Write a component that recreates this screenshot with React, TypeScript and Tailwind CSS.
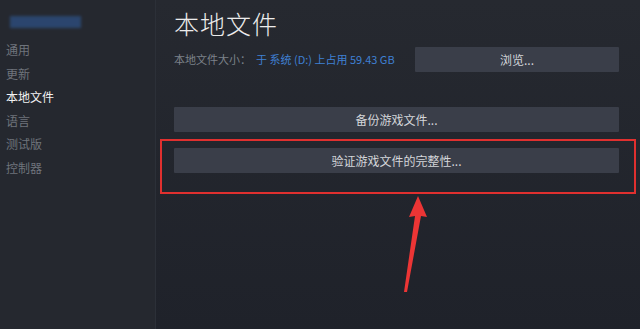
import React from 'react';

const font = { fontFamily: '"Noto Sans CJK SC", "Noto Sans", sans-serif' };

const navItems = ['通用', '更新', '本地文件', '语言', '测试版', '控制器'];

function Btn({ children, className = '' }: { children: React.ReactNode; className?: string }) {
  return (
    <button
      type="button"
      className={`h-[25px] bg-[#3a3e49] text-[#d4d6da] text-[12px] rounded-[1px] flex items-center justify-center ${className}`}
    >
      {children}
    </button>
  );
}

export default function App() {
  return (
    <div className="relative w-[640px] h-[329px] overflow-hidden flex bg-[#21242b]" style={font}>
      {/* sidebar */}
      <div className="w-[156px] shrink-0 bg-[#25282f] border-r border-[#2c3038] pt-[16px]">
        <div className="ml-[10px] w-[71px] h-[12px] bg-[#2d4d7e] opacity-80 blur-[1.5px]" />
        <div className="mt-[10px] flex flex-col">
          {navItems.map((n) => (
            <div
              key={n}
              className={`h-[23.6px] pl-[6px] text-[12px] leading-[23.6px] ${
                n === '本地文件' ? 'text-[#f2f2f2]' : 'text-[#6f747c]'
              }`}
            >
              {n}
            </div>
          ))}
        </div>
      </div>

      {/* main */}
      <div className="flex-1 pl-[18px] pr-[21px] pt-[6px] bg-gradient-to-b from-[#262930] to-[#1f222a]">
        <h1 className="text-[25px] leading-[34px] text-[#ececec] font-light tracking-[1px]">本地文件</h1>
        <div className="mt-[7px] flex items-center">
          <span className="text-[11px] text-[#7c828a] w-[82px]">本地文件大小：</span>
          <span className="text-[11px] text-[#3f80d4] w-[159px]">于 系统 (D:) 上占用 59.43 GB</span>
          <Btn className="flex-1">浏览...</Btn>
        </div>
        <Btn className="w-full mt-[35px]">备份游戏文件...</Btn>
        <Btn className="w-full mt-[16px]">验证游戏文件的完整性...</Btn>
      </div>

      {/* annotation */}
      <div className="absolute left-[160px] top-[139px] w-[476px] h-[55px] border-2 border-[#e0302f]" />
      <svg className="absolute left-0 top-0" width="640" height="329" viewBox="0 0 640 329">
        <polygon points="418,196 409,217 415,216 404,292 407,292 421,216 427,217" fill="#ec3535" />
      </svg>
    </div>
  );
}
